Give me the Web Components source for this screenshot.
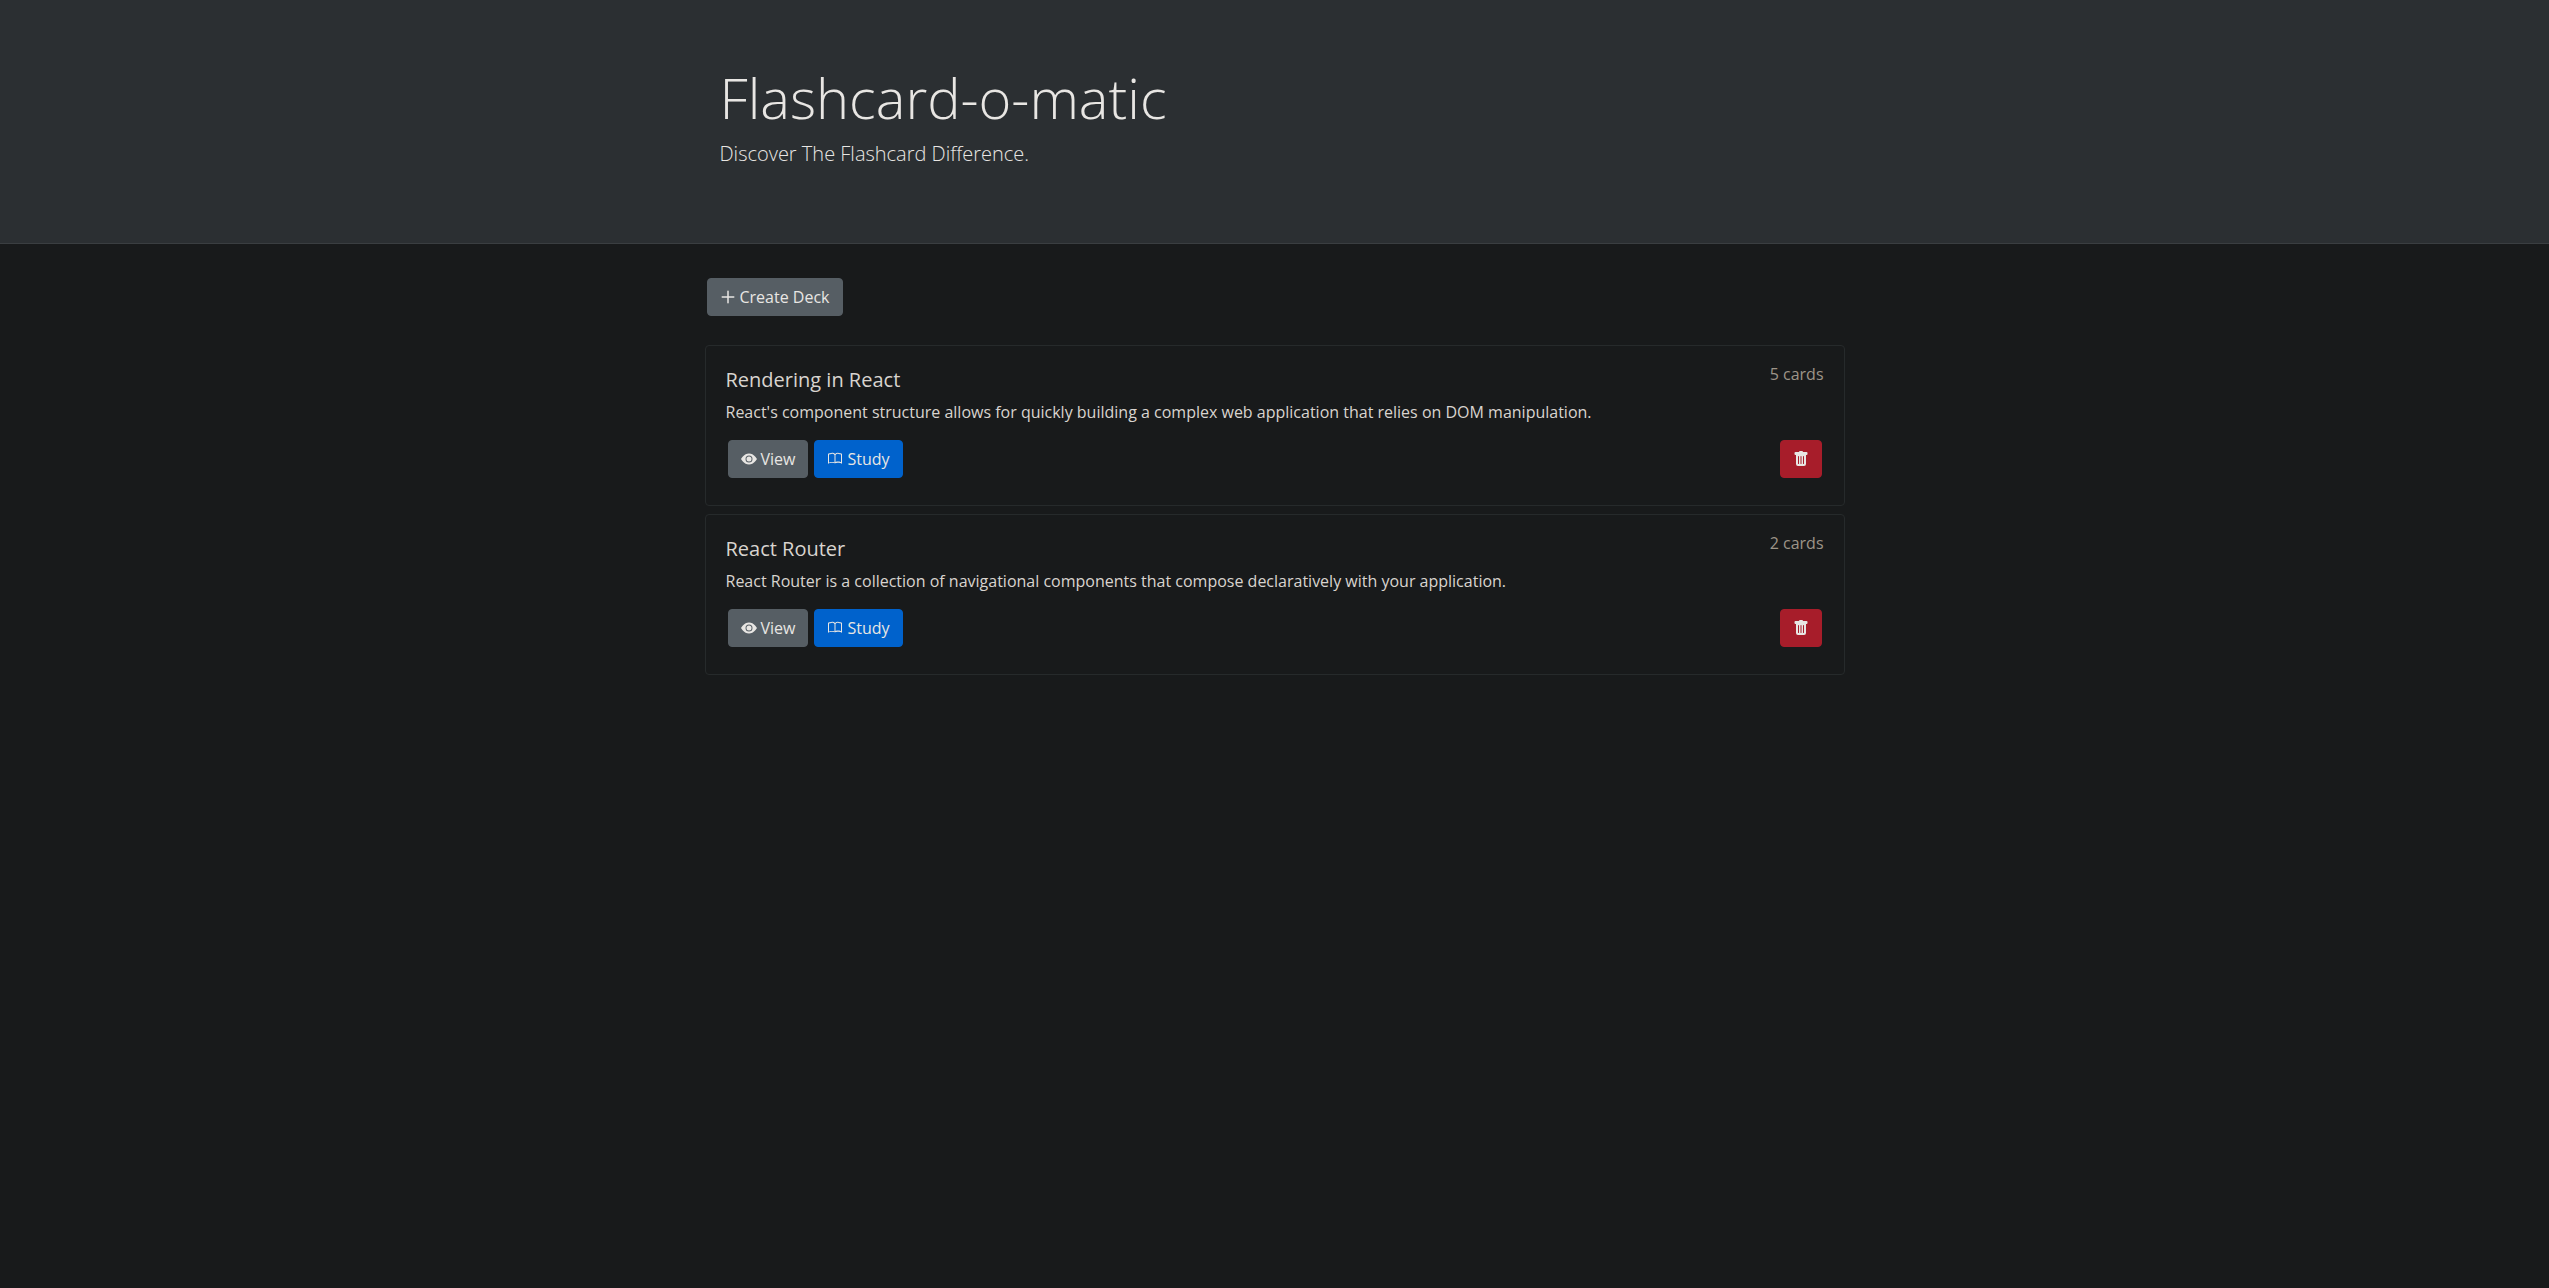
<!DOCTYPE html>
<html><head><meta charset="utf-8"><style>
html,body{margin:0;padding:0;background:#181a1b;color:#d8d4cf;font-family:"Segoe UI","Open Sans","Noto Sans",sans-serif;height:100%}
fc-app{display:block}
</style></head><body>
<fc-app></fc-app>
<script>
const ICONS={
plus:'<svg width="16" height="16" viewBox="0 0 16 16" fill="currentColor"><path d="M8 1.5a.75.75 0 0 1 .75.75v5h5a.75.75 0 0 1 0 1.5h-5v5a.75.75 0 0 1-1.5 0v-5h-5a.75.75 0 0 1 0-1.5h5v-5A.75.75 0 0 1 8 1.5z"/></svg>',
eye:'<svg width="16" height="16" viewBox="0 0 16 16" fill="currentColor"><path d="M10.5 8a2.5 2.5 0 1 1-5 0 2.5 2.5 0 0 1 5 0z"/><path d="M0 8s3-5.5 8-5.5S16 8 16 8s-3 5.5-8 5.5S0 8 0 8zm8 3.5a3.5 3.5 0 1 0 0-7 3.5 3.5 0 0 0 0 7z"/></svg>',
book:'<svg width="16" height="16" viewBox="0 0 16 16" fill="currentColor"><path d="M1 2.83v9.87c.92-.4 2.23-.8 3.5-.93 1.37-.14 2.53.06 3.5.6.97-.54 2.13-.74 3.5-.6 1.27.13 2.58.53 3.5.93V2.83c-.87-.42-2.14-.8-3.4-.93-1.4-.14-2.7.08-3.6.98-.9-.9-2.2-1.12-3.6-.98-1.26.13-2.53.51-3.4.93zM7.5 4.1v7.4c-.95-.42-2.1-.56-3.1-.46-1 .1-2 .36-2.4.53V3.47c.5-.22 1.5-.5 2.5-.58 1.2-.11 2.3.1 3 1.2zm1 7.4V4.1c.7-1.1 1.8-1.31 3-1.2 1 .08 2 .36 2.5.58v7.6c-.4-.17-1.4-.43-2.4-.53-1-.1-2.15.04-3.1.46z"/></svg>',
trash:'<svg width="16" height="16" viewBox="0 0 16 16" fill="currentColor"><path d="M2.5 1a1 1 0 0 0-1 1v1a1 1 0 0 0 1 1H3v9a2 2 0 0 0 2 2h6a2 2 0 0 0 2-2V4h.5a1 1 0 0 0 1-1V2a1 1 0 0 0-1-1H10a1 1 0 0 0-1-1H7a1 1 0 0 0-1 1H2.5zm3 4a.5.5 0 0 1 .5.5v7a.5.5 0 0 1-1 0v-7a.5.5 0 0 1 .5-.5zM8 5a.5.5 0 0 1 .5.5v7a.5.5 0 0 1-1 0v-7A.5.5 0 0 1 8 5zm3 .5v7a.5.5 0 0 1-1 0v-7a.5.5 0 0 1 1 0z"/></svg>'
};
class Base extends HTMLElement{
  render(html){ if(!this.shadowRoot) this.attachShadow({mode:'open'}); this.shadowRoot.innerHTML=html; }
}
class FcBtn extends Base{
  connectedCallback(){
    const v=this.getAttribute('variant')||'secondary';
    const c={secondary:'#565e64',primary:'#0062cc',danger:'#a71d2a'}[v];
    this.render(`<style>
    :host{display:inline-flex;align-items:center;justify-content:center;box-sizing:border-box;height:38px;padding:0 12px;background:${c};border:1px solid ${c};border-radius:4px;color:#e8e6e3;font-size:16px;line-height:24px;white-space:nowrap}
    svg{display:block;margin-right:4px}
    :host([icon-only]) svg{margin:0}
    </style>${ICONS[this.getAttribute('icon')]||''}<slot></slot>`);
  }
}
class FcHero extends Base{
  connectedCallback(){
    this.render(`<style>
    :host{display:block;background:#2b2f32;border-bottom:1px solid #3a3e41;height:244px;box-sizing:border-box}
    .c{width:1140px;margin:0 auto;padding:64px 15px 0;box-sizing:border-box}
    h1{margin:0 0 8px;font-size:56px;font-weight:300;line-height:67px;color:#e8e6e3}
    p{margin:0;font-size:20px;font-weight:300;line-height:30px;color:#e8e6e3}
    </style><div class="c"><h1>Flashcard-o-matic</h1><p>Discover The Flashcard Difference.</p></div>`);
  }
}
class FcDeck extends Base{
  connectedCallback(){
    this.render(`<style>
    :host{display:block;box-sizing:border-box;border:1px solid #262a2b;border-radius:4px;padding:20px;background:#181a1b;height:161px;margin-bottom:8px}
    .top{display:flex;justify-content:space-between;align-items:flex-start}
    h5{margin:0 0 8px;font-size:20px;font-weight:500;line-height:24px;padding-top:2px;color:#d8d4cf}
    small{font-size:16px;color:#9d9488;line-height:24px;margin-top:-4px}
    p{margin:0 0 16px;font-size:16px;line-height:24px;color:#d8d4cf}
    .row{display:flex;justify-content:space-between;padding:0 2px}
    .l{display:flex;gap:6px}
    </style><div class="top"><h5>${this.getAttribute('name')}</h5><small>${this.getAttribute('count')}</small></div>
    <p><slot></slot></p>
    <div class="row"><div class="l"><fc-btn icon="eye">View</fc-btn><fc-btn icon="book" variant="primary">Study</fc-btn></div><fc-btn icon="trash" variant="danger" icon-only></fc-btn></div>`);
  }
}
class FcApp extends Base{
  connectedCallback(){
    this.render(`<style>
    :host{display:block}
    .c{width:1140px;margin:0 auto;box-sizing:border-box;padding-top:34px}
    .new{margin:0 2px 29px;display:block}
    </style><fc-hero></fc-hero><div class="c"><div class="new"><fc-btn icon="plus">Create Deck</fc-btn></div>
    <fc-deck name="Rendering in React" count="5 cards">React's component structure allows for quickly building a complex web application that relies on DOM manipulation.</fc-deck>
    <fc-deck name="React Router" count="2 cards">React Router is a collection of navigational components that compose declaratively with your application.</fc-deck></div>`);
  }
}
customElements.define('fc-btn',FcBtn);customElements.define('fc-hero',FcHero);customElements.define('fc-deck',FcDeck);customElements.define('fc-app',FcApp);
</script></body></html>
